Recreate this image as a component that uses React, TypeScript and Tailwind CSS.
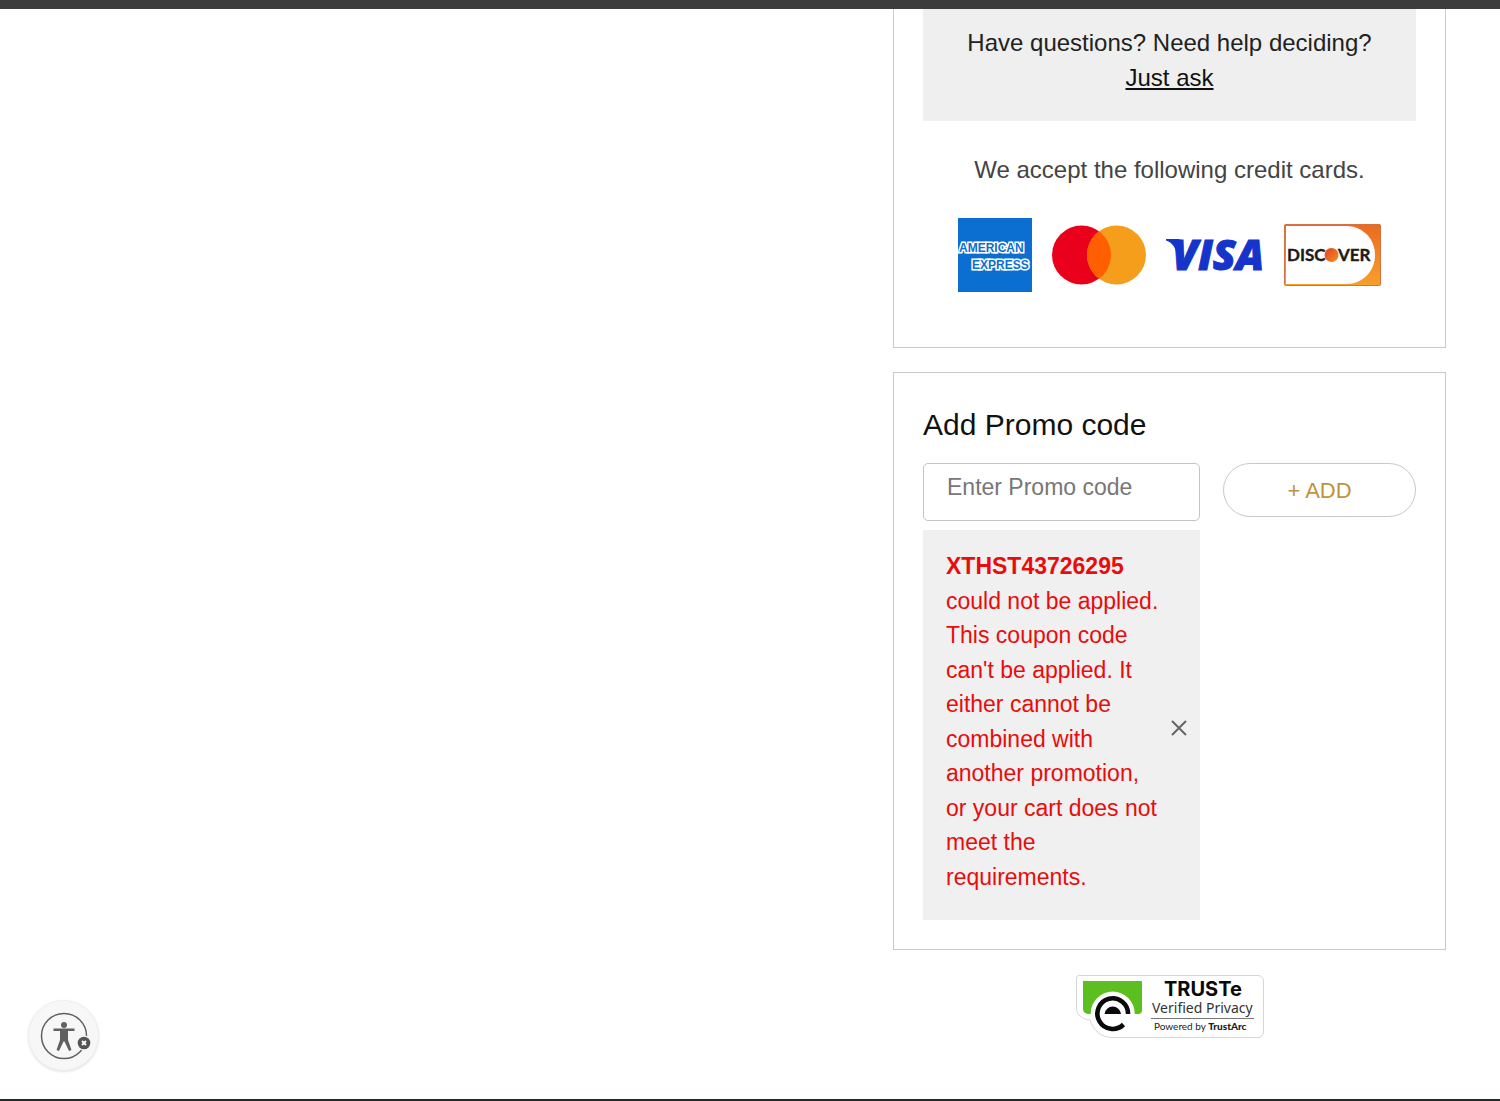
import { useState } from 'react';
import type { FormEvent } from 'react';

type RejectedPromo = {
  code: string;
  reason: string;
};

const initialRejected: RejectedPromo[] = [
  {
    code: 'XTHST43726295',
    reason:
      "could not be applied. This coupon code can't be applied. It either cannot be combined with another promotion, or your cart does not meet the requirements.",
  },
];

function AmexLogo() {
  return (
    <svg role="img" aria-label="American Express" width="74" height="74" viewBox="0 0 74 74">
      <rect width="74" height="74" fill="#0a6fd0" />
      <g
        fontFamily="'Liberation Sans', sans-serif"
        fontWeight="700"
        fontSize="12"
        fill="#0a6fd0"
        stroke="#fff"
        strokeWidth="3"
        paintOrder="stroke"
      >
        <text x="1" y="34">AMERICAN</text>
        <text x="14" y="51">EXPRESS</text>
      </g>
    </svg>
  );
}

function MastercardLogo() {
  return (
    <svg role="img" aria-label="Mastercard" width="94" height="60" viewBox="0 0 94 60">
      <circle cx="29.5" cy="30" r="29.5" fill="#eb001b" />
      <circle cx="64.5" cy="30" r="29.5" fill="#f59e1b" />
      <path d="M47 6.3a29.5 29.5 0 0 1 0 47.4a29.5 29.5 0 0 1 0-47.4z" fill="#ff5f00" />
    </svg>
  );
}

function VisaLogo() {
  return (
    <svg role="img" aria-label="Visa" width="98" height="74" viewBox="0 0 98 74">
      <path d="M0 22.500V21H12c2 0 3 1 3.500 3L18 39L11 38C10 30 7 25 0 22.500z" fill="#1434cb" />
      <text
        x="6"
        y="52"
        fontFamily="'Open Sans', sans-serif"
        fontWeight="800"
        fontStyle="italic"
        fontSize="42"
        fill="#1434cb"
        stroke="#1434cb"
        strokeWidth="1"
      >
        VISA
      </text>
    </svg>
  );
}

function DiscoverLogo() {
  return (
    <svg role="img" aria-label="Discover" width="97" height="62" viewBox="0 0 97 62">
      <defs>
        <linearGradient id="discover-edge" x1="0" y1="0" x2="0" y2="1">
          <stop offset="0" stopColor="#ea6a20" />
          <stop offset="1" stopColor="#f7a02c" />
        </linearGradient>
        <linearGradient id="discover-ball" x1="0" y1="0" x2="1" y2="1">
          <stop offset="0" stopColor="#e33d1c" />
          <stop offset="1" stopColor="#f7902a" />
        </linearGradient>
      </defs>
      <rect width="97" height="62" rx="2" fill="url(#discover-edge)" />
      <path d="M2 2H62C79 2 91 15 91 31S79 60 62 60H2z" fill="#fff" />
      <rect x="0.5" y="0.5" width="96" height="61" rx="2" fill="none" stroke="#d9713f" />
      <g fontFamily="Lato, sans-serif" fontWeight="700" fontSize="17" fill="#1f1a1a" stroke="#1f1a1a" strokeWidth="0.4">
        <text x="3" y="37">DISC</text>
        <text x="54" y="37">VER</text>
      </g>
      <circle cx="47.5" cy="31" r="7" fill="url(#discover-ball)" />
    </svg>
  );
}

function TrusteBadge() {
  return (
    <svg role="img" aria-label="TRUSTe Verified Privacy, powered by TrustArc" width="188" height="63" viewBox="0 0 188 63">
      <path
        d="M3 .5H182a5.500 5.500 0 0 1 5.500 5.500V57a5.500 5.500 0 0 1-5.500 5.500H36C25 62.500 17 55 14 45C6 44 .5 40 .5 33V3A2.500 2.500 0 0 1 3 .5z"
        fill="#fff"
        stroke="#d6d6d6"
      />
      <path d="M7 6H66V35a4 4 0 0 1-4 4H12a5 5 0 0 1-5-5z" fill="#5bc01f" />
      <circle cx="36.7" cy="38.5" r="22" fill="#fff" />
      <path d="M47.500 49.500A15.300 15.300 0 1 1 52 39" fill="none" stroke="#0a0a0a" strokeWidth="4.600" />
      <path d="M28.500 39a8.300 8.300 0 0 1 16.500 0z" fill="#0a0a0a" />
      <text x="88" y="21" fontFamily="Inter, sans-serif" fontWeight="700" fontSize="20" fill="#0a0a0a">
        TRUSTe
      </text>
      <text x="76" y="38" fontFamily="'Noto Sans', sans-serif" fontSize="14" fill="#333">
        Verified Privacy
      </text>
      <path d="M75 43.500H178" stroke="#777" />
      <text x="78" y="55" fontFamily="Lato, sans-serif" fontSize="10" fill="#222">
        Powered by <tspan fontWeight="900">TrustArc</tspan>
      </text>
    </svg>
  );
}

function AccessibilityIcon() {
  return (
    <svg aria-hidden="true" width="50" height="50" viewBox="0 0 50 50" className="overflow-visible">
      <circle cx="25" cy="25" r="22.5" fill="none" stroke="#606060" strokeWidth="1.5" />
      <circle cx="25" cy="14" r="3" fill="#606060" />
      <path d="M14.500 17.500H35.500V20H29V29L32.500 39L30 40L25.500 30.500H24.500L20 40L17.500 39L21 29V20H14.500z" fill="#606060" />
      <circle cx="45" cy="32" r="7.5" fill="#f7f7f7" />
      <circle cx="45" cy="32" r="6.3" fill="#555" />
      <path d="M43 30L47 34M47 30L43 34" stroke="#fff" strokeWidth="1.800" />
    </svg>
  );
}

export default function App() {
  const [code, setCode] = useState('');
  const [rejected, setRejected] = useState<RejectedPromo[]>(initialRejected);

  function handleAdd(e: FormEvent) {
    e.preventDefault();
    const value = code.trim();
    if (!value) return;
    setRejected([{ code: value, reason: 'could not be applied.' }]);
    setCode('');
  }

  return (
    <div className="flex min-h-screen flex-col border-t-9 border-b-2 border-t-[#3c3c3c] border-b-[#262a2b] bg-white font-['Liberation_Sans',Arial,sans-serif] text-[23px] leading-normal text-[#222]">
      <main className="flex flex-1 justify-end pr-[54px]">
        <div className="w-full max-w-[553px]">
          <section className="border-x border-b border-[#c9c9c9] px-[29px] pb-[55px] text-center text-[24px] leading-[35px]">
            <div className="bg-[#efefef] pt-4 pb-[26px]">
              <p>Have questions? Need help deciding?</p>
              <a href="#ask" className="text-[#111] underline decoration-2 underline-offset-2">
                Just ask
              </a>
            </div>
            <p className="mt-[31px] text-[#444]">We accept the following credit cards.</p>
            <div className="mt-[31px] flex flex-wrap items-center justify-center gap-5">
              <AmexLogo />
              <MastercardLogo />
              <VisaLogo />
              <DiscoverLogo />
            </div>
          </section>

          <section className="mt-6 border border-[#c9c9c9] px-[29px] py-[29px]">
            <h2 className="text-[30px] text-[#111]">
              <label htmlFor="promo-code">Add Promo code</label>
            </h2>
            <form onSubmit={handleAdd} className="mt-4 grid grid-cols-[277fr_193fr] items-start gap-x-[23px]">
              <div>
                <input
                  id="promo-code"
                  value={code}
                  onChange={(e) => setCode(e.target.value)}
                  placeholder="Enter Promo code"
                  className="block h-[58px] w-full rounded-[5px] border border-[#c4c4c4] pb-[10px] pl-[23px] placeholder:text-[#777]"
                />
                {rejected.map((promo) => (
                  <div key={promo.code} className="mt-[9px] flex items-center bg-[#f0f0f0] pt-[19px] pr-3 pb-[26px] pl-[23px]">
                    <p className="min-w-0 flex-1 text-[#e90c0c]">
                      <strong className="font-bold">{promo.code}</strong> {promo.reason}
                    </p>
                    <button
                      type="button"
                      aria-label={`Remove ${promo.code}`}
                      onClick={() => setRejected(rejected.filter((p) => p.code !== promo.code))}
                      className="shrink-0 pt-3 pl-2"
                    >
                      <svg width="18" height="18" viewBox="0 0 18 18" fill="none" stroke="#666" strokeWidth="2">
                        <path d="M2 2L16 16M16 2L2 16" />
                      </svg>
                    </button>
                  </div>
                ))}
              </div>
              <button type="submit" className="h-[54px] rounded-full border border-[#c9c9c9] text-[22px] text-[#c0923f]">
                + ADD
              </button>
            </form>
          </section>

          <a href="#truste" className="mx-auto mt-[25px] block w-[188px]">
            <TrusteBadge />
          </a>
        </div>
      </main>

      <button
        type="button"
        aria-label="Accessibility options"
        className="fixed bottom-[30px] left-7 flex size-[71px] items-center justify-center rounded-full border border-[#eee] bg-[#f7f7f7] shadow-sm"
      >
        <AccessibilityIcon />
      </button>
    </div>
  );
}
